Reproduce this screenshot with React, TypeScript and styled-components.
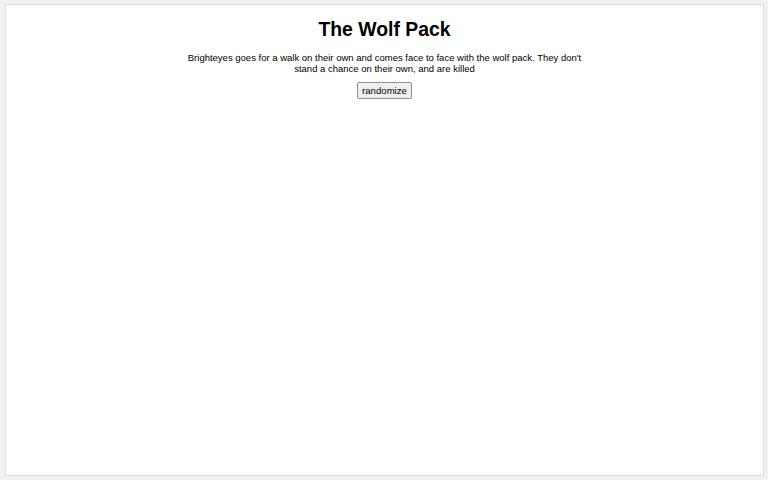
import React, { useState } from 'react'
import styled, { createGlobalStyle } from 'styled-components'

const stories = [
  "Brighteyes goes for a walk on their own and comes face to face with the wolf pack. They don't stand a chance on their own, and are killed",
  'Brighteyes spends the night howling at the moon with the wolf pack, and comes home at dawn',
  'The wolf pack circles the camp, but Brighteyes keeps the fire burning until morning',
]

const GlobalStyle = createGlobalStyle`
  html, body {
    margin: 0;
    padding: 0;
    background: #f1f1f1;
  }
  body {
    font-family: "Liberation Sans", Arial, sans-serif;
  }
`

const Page = styled.div`
  padding: 4px 4px 4px 5px;
  height: 480px;
  box-sizing: border-box;
`

const Card = styled.div`
  background: #fff;
  border: 1px solid #dcdcdc;
  height: 100%;
  box-sizing: border-box;
  display: flex;
  flex-direction: column;
  align-items: center;
  padding-top: 12px;
`

const Title = styled.h1`
  margin: 0;
  font-size: 19.4px;
  font-weight: bold;
  color: #000;
  line-height: 24px;
`

const Story = styled.p`
  margin: 11px 0 0;
  max-width: 404px;
  font-size: 9.5px;
  line-height: 11px;
  text-align: center;
  color: #000;
`

const RandomButton = styled.button`
  margin-top: 8px;
  font-family: "Liberation Sans", Arial, sans-serif;
  font-size: 9.6px;
  line-height: 11px;
  padding: 2px 4px 2px;
  background: #f0f0f0;
  border: 1px solid #8f8f8f;
  border-radius: 2px;
  color: #000;
`

export default function App() {
  const [index, setIndex] = useState(0)

  return (
    <Page>
      <GlobalStyle />
      <Card>
        <Title>The Wolf Pack</Title>
        <Story>{stories[index]}</Story>
        <RandomButton onClick={() => setIndex(Math.floor(Math.random() * stories.length))}>
          randomize
        </RandomButton>
      </Card>
    </Page>
  )
}
